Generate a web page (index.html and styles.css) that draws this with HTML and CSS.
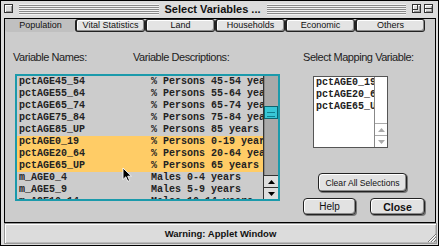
FILE: index.html
```html
<!DOCTYPE html>
<html>
<head>
<meta charset="utf-8">
<link rel="stylesheet" href="styles.css">
</head>
<body>
<div class="window">
  <div class="titlebar">
    <span class="tbox closebox"></span>
    <span class="stripes"></span>
    <span class="title">Select Variables ...</span>
    <span class="stripes"></span>
    <span class="tbox zoombox"></span>
    <span class="tbox collapsebox"></span>
  </div>
  <div class="body">
    <div class="tabs">
      <div class="tab active">Population</div>
      <div class="tab">Vital Statistics</div>
      <div class="tab">Land</div>
      <div class="tab">Households</div>
      <div class="tab">Economic</div>
      <div class="tab">Others</div>
    </div>
    <div class="main">
      <div class="left">
        <div class="labels">
          <span class="lbl names">Variable Names:</span>
          <span class="lbl">Variable Descriptions:</span>
        </div>
        <div class="varlist">
          <div class="rows">
            <div class="row"><span class="vname">pctAGE45_54</span><span>% Persons 45-54 years</span></div>
            <div class="row"><span class="vname">pctAGE55_64</span><span>% Persons 55-64 years</span></div>
            <div class="row"><span class="vname">pctAGE65_74</span><span>% Persons 65-74 years</span></div>
            <div class="row"><span class="vname">pctAGE75_84</span><span>% Persons 75-84 years</span></div>
            <div class="row"><span class="vname">pctAGE85_UP</span><span>% Persons 85 years and over</span></div>
            <div class="row sel"><span class="vname">pctAGE0_19</span><span>% Persons 0-19 years</span></div>
            <div class="row sel"><span class="vname">pctAGE20_64</span><span>% Persons 20-64 years</span></div>
            <div class="row sel"><span class="vname">pctAGE65_UP</span><span>% Persons 65 years and over</span></div>
            <div class="row"><span class="vname">m_AGE0_4</span><span>Males 0-4 years</span></div>
            <div class="row"><span class="vname">m_AGE5_9</span><span>Males 5-9 years</span></div>
            <div class="row"><span class="vname">m_AGE10_14</span><span>Males 10-14 years</span></div>
          </div>
          <div class="vscroll">
            <div class="track"><div class="thumb"></div></div>
            <div class="arrow"><svg width="7" height="4" viewBox="0 0 7 4"><path d="M3.5 0 L7 4 L0 4 Z" fill="#000"/></svg></div>
            <div class="arrow"><svg width="7" height="4" viewBox="0 0 7 4"><path d="M0 0 L7 0 L3.5 4 Z" fill="#000"/></svg></div>
          </div>
        </div>
      </div>
      <div class="right">
        <span class="lbl">Select Mapping Variable:</span>
        <div class="maplist">
          <div class="rows maprows">
            <div class="row">pctAGE0_19</div>
            <div class="row">pctAGE20_64</div>
            <div class="row">pctAGE65_UP</div>
          </div>
          <div class="mapscroll">
            <div class="space"></div>
            <div class="arr"><svg width="7" height="4" viewBox="0 0 7 4"><path d="M3.5 0 L7 4 L0 4 Z" fill="#aaa"/></svg></div>
            <div class="arr"><svg width="7" height="4" viewBox="0 0 7 4"><path d="M0 0 L7 0 L3.5 4 Z" fill="#aaa"/></svg></div>
          </div>
        </div>
        <div class="btn clear">Clear All Selections</div>
        <div class="btnrow">
          <div class="btn help">Help</div>
          <div class="btn close">Close</div>
        </div>
      </div>
    </div>
  </div>
  <div class="status">Warning: Applet Window</div>
  <svg class="grow" width="12" height="12" viewBox="0 0 12 12">
    <path d="M11 3 L3 11 M11 6 L6 11 M11 9 L9 11" stroke="#777" stroke-width="1"/>
    <path d="M11 4 L4 11 M11 7 L7 11" stroke="#fff" stroke-width="1"/>
  </svg>
  <svg class="cursor" width="11" height="16" viewBox="0 0 11 16">
    <path d="M1 1 L1 12.5 L3.8 9.8 L5.8 14.3 L7.6 13.5 L5.7 9.2 L9.4 9.2 Z" fill="#000" stroke="#fff" stroke-width="0.9"/>
  </svg>
</div>
</body>
</html>
```
FILE: styles.css
```css
* { box-sizing: border-box; margin: 0; padding: 0; }
body { margin: 0; background: #fff; font-family: "Liberation Sans", Arial, sans-serif; }

.window {
  position: relative;
  width: 439px;
  height: 246px;
  border: 1px solid #000;
  background: #dcdcdc;
  display: flex;
  flex-direction: column;
}

.titlebar {
  height: 17px;
  flex: none;
  display: flex;
  align-items: flex-start;
  padding: 2px 5px 0 3px;
}
.tbox {
  flex: none;
  width: 9px;
  height: 9px;
  margin-top: 1px;
  border: 1px solid #333;
  background: #ddd;
  box-shadow: inset 1px 1px #fff, inset -1px -1px #999;
  position: relative;
}
.zoombox { margin-left: 0; }
.zoombox::after {
  content: "";
  position: absolute;
  left: 0; top: 0;
  width: 4px; height: 4px;
  border-right: 1px solid #333;
  border-bottom: 1px solid #333;
}
.collapsebox { margin-left: 3px; }
.collapsebox::after {
  content: "";
  position: absolute;
  left: 0; right: 0; top: 3px;
  border-top: 1px solid #333;
}
.stripes {
  flex: 1;
  height: 11px;
  margin: 1px 6px 0 6px;
  background: repeating-linear-gradient(to bottom, #f2f2f2 0 1px, #8a8a8a 1px 2px);
}
.title {
  font-weight: bold;
  font-size: 11px;
  line-height: 13px;
  color: #111;
  white-space: nowrap;
}

.body {
  flex: 1;
  margin: 0 2px 0 3px;
  border: 1px solid #000;
  background: #cccccc;
  display: flex;
  flex-direction: column;
}

.tabs {
  display: grid;
  grid-template-columns: repeat(6, 70px);
  height: 13px;
  flex: none;
}
.tab {
  font-size: 9px;
  line-height: 11px;
  text-align: center;
  color: #111;
  border: 1px solid #222;
  border-left-width: 2px;
  border-radius: 3px;
  background: #e4e4e4;
  box-shadow: inset -1px -1px #8a8a8a, inset 1px 1px #fff;
  white-space: nowrap;
}
.tab.active {
  background: #c0c0c0;
  border-color: transparent;
  box-shadow: none;
}

.main {
  flex: 1;
  display: flex;
  padding-top: 19px;
}
.left {
  width: 290px;
  flex: none;
  padding-left: 8px;
}
.labels {
  display: flex;
  height: 13px;
}
.lbl {
  font-size: 11px;
  letter-spacing: -0.45px;
  line-height: 13px;
  color: #222;
  white-space: nowrap;
}
.lbl.names { width: 120px; }

.varlist {
  margin-top: 10px;
  margin-left: 2px;
  width: 265px;
  height: 127px;
  border: 2px solid #1b9aab;
  background: #cccccc;
  display: flex;
}
.rows {
  width: 246px;
  flex: none;
  overflow: hidden;
  font-family: "Liberation Mono", "Courier New", monospace;
  font-weight: bold;
  font-size: 10px;
  line-height: 12px;
  color: #222;
  white-space: nowrap;
}
.row {
  display: flex;
  height: 12px;
  padding-left: 2px;
}
.row.sel { background: #ffcc66; }
.vname { width: 132px; flex: none; }

.vscroll {
  width: 15px;
  flex: none;
  display: flex;
  flex-direction: column;
  border-left: 1px solid #333;
}
.track {
  flex: 1;
  background: #a9a9a9;
  box-shadow: inset 1px 0 #888;
  padding-top: 30px;
}
.thumb {
  height: 13px;
  background: repeating-linear-gradient(to bottom, #38c6d6 0 3px, #117f8f 3px 4px);
  background-size: 8px 9px;
  background-position: center 2px;
  background-repeat: no-repeat;
  background-color: #38c6d6;
  border: 1px solid #0a6470;
}
.arrow {
  height: 12px;
  flex: none;
  background: #dedede;
  border-top: 1px solid #333;
  display: flex;
  align-items: center;
  justify-content: center;
}

.right {
  flex: 1;
  display: flex;
  flex-direction: column;
  align-items: flex-start;
}
.right .lbl { margin-left: 8px; }
.maplist {
  margin-top: 12px;
  margin-left: 18px;
  width: 75px;
  height: 72px;
  border: 1px solid #555;
  background: #fff;
  display: flex;
}
.maprows {
  width: 60px;
  padding-top: 0;
}
.maprows .row { padding-left: 2px; }
.mapscroll {
  width: 13px;
  flex: none;
  display: flex;
  flex-direction: column;
  border-left: 1px solid #888;
}
.mapscroll .space { flex: 1; }
.mapscroll .arr {
  height: 12px;
  flex: none;
  border-top: 1px solid #aaa;
  display: flex;
  align-items: center;
  justify-content: center;
}

.btn {
  border: 1px solid #222;
  border-radius: 4px;
  background: #e2e2e2;
  box-shadow: inset -1px -1px #8a8a8a, inset 1px 1px #fff, 1px 1px 0 #777;
  display: flex;
  align-items: center;
  justify-content: center;
  color: #111;
  white-space: nowrap;
}
.clear {
  margin-top: 25px;
  margin-left: 23px;
  width: 89px;
  height: 19px;
  font-size: 8.6px;
}
.btnrow {
  margin-top: 6px;
  margin-left: 8px;
  display: flex;
  gap: 14px;
}
.help { width: 53px; height: 17px; font-size: 10px; }
.close { width: 55px; height: 17px; font-size: 10.5px; font-weight: bold; }

.status {
  height: 21px;
  flex: none;
  margin: 0 1px 1px 3px;
  border: 1px solid #999;
  box-shadow: inset 1px 1px #fff, inset -1px -1px #bbb;
  background: #dcdcdc;
  display: flex;
  align-items: center;
  justify-content: center;
  font-weight: bold;
  font-size: 9.5px;
  color: #111;
}

.grow {
  position: absolute;
  right: 1px;
  bottom: 2px;
}
.cursor {
  position: absolute;
  left: 121px;
  top: 166px;
}
```
